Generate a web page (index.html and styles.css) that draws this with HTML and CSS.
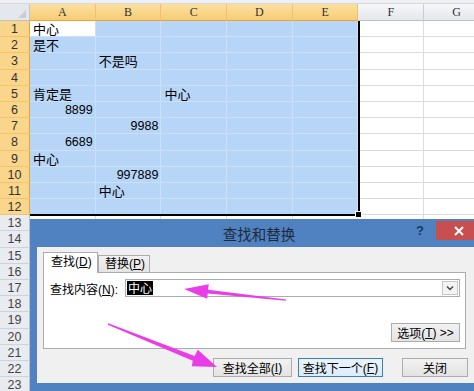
FILE: index.html
```html
<!DOCTYPE html>
<html lang="zh-CN">
<head>
    <meta charset="UTF-8">
    <title>查找和替换</title>
    <link rel="stylesheet" href="styles.css">
</head>
<body>

<div class="top-strip"></div>

<div class="sheet">
    <div class="row head">
        <div class="corner"><span class="corner-tri"></span></div>
        <div class="ch on">A</div><div class="ch on">B</div><div class="ch on">C</div><div class="ch on">D</div><div class="ch on">E</div><div class="ch">F</div><div class="ch">G</div>
    </div>
    <div class="row"><div class="rh on">1</div><div class="c active">中心</div><div class="c s"></div><div class="c s"></div><div class="c s"></div><div class="c s"></div><div class="c"></div><div class="c"></div></div>
    <div class="row"><div class="rh on">2</div><div class="c s">是不</div><div class="c s"></div><div class="c s"></div><div class="c s"></div><div class="c s"></div><div class="c"></div><div class="c"></div></div>
    <div class="row"><div class="rh on">3</div><div class="c s"></div><div class="c s">不是吗</div><div class="c s"></div><div class="c s"></div><div class="c s"></div><div class="c"></div><div class="c"></div></div>
    <div class="row"><div class="rh on">4</div><div class="c s"></div><div class="c s"></div><div class="c s"></div><div class="c s"></div><div class="c s"></div><div class="c"></div><div class="c"></div></div>
    <div class="row"><div class="rh on">5</div><div class="c s">肯定是</div><div class="c s"></div><div class="c s">中心</div><div class="c s"></div><div class="c s"></div><div class="c"></div><div class="c"></div></div>
    <div class="row"><div class="rh on">6</div><div class="c s n">8899</div><div class="c s"></div><div class="c s"></div><div class="c s"></div><div class="c s"></div><div class="c"></div><div class="c"></div></div>
    <div class="row"><div class="rh on">7</div><div class="c s"></div><div class="c s n">9988</div><div class="c s"></div><div class="c s"></div><div class="c s"></div><div class="c"></div><div class="c"></div></div>
    <div class="row"><div class="rh on">8</div><div class="c s n">6689</div><div class="c s"></div><div class="c s"></div><div class="c s"></div><div class="c s"></div><div class="c"></div><div class="c"></div></div>
    <div class="row"><div class="rh on">9</div><div class="c s">中心</div><div class="c s"></div><div class="c s"></div><div class="c s"></div><div class="c s"></div><div class="c"></div><div class="c"></div></div>
    <div class="row"><div class="rh on">10</div><div class="c s"></div><div class="c s n">997889</div><div class="c s"></div><div class="c s"></div><div class="c s"></div><div class="c"></div><div class="c"></div></div>
    <div class="row"><div class="rh on">11</div><div class="c s"></div><div class="c s">中心</div><div class="c s"></div><div class="c s"></div><div class="c s"></div><div class="c"></div><div class="c"></div></div>
    <div class="row"><div class="rh on">12</div><div class="c s"></div><div class="c s"></div><div class="c s"></div><div class="c s"></div><div class="c s"></div><div class="c"></div><div class="c"></div></div>
    <div class="row"><div class="rh">13</div><div class="c"></div><div class="c"></div><div class="c"></div><div class="c"></div><div class="c"></div><div class="c"></div><div class="c"></div></div>
    <div class="row"><div class="rh">14</div></div>
    <div class="row"><div class="rh">15</div></div>
    <div class="row"><div class="rh">16</div></div>
    <div class="row"><div class="rh">17</div></div>
    <div class="row"><div class="rh">18</div></div>
    <div class="row"><div class="rh">19</div></div>
    <div class="row"><div class="rh">20</div></div>
    <div class="row"><div class="rh">21</div></div>
    <div class="row"><div class="rh">22</div></div>
    <div class="row"><div class="rh">23</div></div>
</div>

<!-- selection outline A1:E12 -->
<div class="selection"><span class="handle"></span></div>

<div class="dialog">
    <div class="titlebar">
        <div class="title">查找和替换</div>
        <div class="controls">
            <span class="help">?</span>
            <span class="close">
                <svg width="10" height="10" viewBox="0 0 10 10"><path d="M1 1 L9 9 M9 1 L1 9" stroke="#fff" stroke-width="2"/></svg>
            </span>
        </div>
    </div>
    <div class="dlg-body">
        <div class="tabs">
            <div class="tab active">查找(<u>D</u>)</div>
            <div class="tab">替换(<u>P</u>)</div>
        </div>
        <div class="panel">
            <div class="find-row">
                <span class="find-label">查找内容(<u>N</u>):</span>
                <div class="find-input">
                    <span class="hl">中心</span>
                    <span class="drop">
                        <svg width="8" height="6" viewBox="0 0 8 6"><path d="M1 1.5 L4 4.5 L7 1.5" fill="none" stroke="#444" stroke-width="1.4"/></svg>
                    </span>
                </div>
            </div>
            <button class="btn options">选项(<u>T</u>) &gt;&gt;</button>
        </div>
        <div class="actions">
            <button class="btn find-all">查找全部(<u>I</u>)</button>
            <button class="btn find-next">查找下一个(<u>F</u>)</button>
            <button class="btn close-btn">关闭</button>
        </div>
    </div>
</div>

<svg class="arrows" width="474" height="391" viewBox="0 0 474 391">
    <polygon fill="#e93de8" points="286,299.5 208.1,289.8 208.8,284.2 184,289 207.2,298.8 207.7,293.6 286,300.7"/>
    <polygon fill="#e93de8" points="108.2,323.3 194.6,356.1 197.8,349.8 217,367 191.8,366.2 192.8,360.8 107.8,324.7"/>
</svg>

</body>
</html>
```

FILE: styles.css
```css
body {
    margin: 0;
    width: 474px;
    height: 391px;
    overflow: hidden;
    position: relative;
    background: #fff;
    font-family: "Liberation Sans", "Noto Sans CJK SC", sans-serif;
}
.top-strip {
    height: 4px;
    background: #eef0f3;
    border-bottom: 1px solid #d5d9de;
    box-sizing: border-box;
}
.row {
    display: grid;
    grid-template-columns: 30px repeat(7, 65.7px);
    height: 16.2px;
}
.row.head {
    height: 17px;
}
.corner {
    background: #e4e8ed;
    border-right: 1px solid #c2c8cf;
    border-bottom: 1px solid #b9c1ca;
    position: relative;
}
.corner-tri {
    position: absolute;
    right: 3px;
    bottom: 2px;
    width: 0;
    height: 0;
    border-left: 8px solid transparent;
    border-bottom: 8px solid #c9ced5;
}
.ch {
    background: linear-gradient(#f6f7f9, #e3e7ec);
    border-right: 1px solid #c9ced5;
    border-bottom: 1px solid #b9c1ca;
    font-family: "Liberation Serif", serif;
    font-size: 12px;
    color: #333;
    text-align: center;
    line-height: 16px;
}
.ch.on {
    background: linear-gradient(#fbe0a2, #f7cd73);
    border-right-color: #f0c270;
    border-bottom-color: #e8a23e;
}
.rh {
    background: #e8ecf1;
    border-right: 1px solid #b9c1ca;
    border-bottom: 1px solid #cdd3da;
    font-size: 12.5px;
    color: #444;
    text-align: center;
    line-height: 17px;
    height: 16.2px;
    box-sizing: border-box;
    overflow: hidden;
}
.rh.on {
    background: #f9d68c;
    border-right-color: #e8a23e;
    border-bottom-color: #f3c46c;
    color: #333;
}
.c {
    border-right: 1px solid #dadcdd;
    border-bottom: 1px solid #dadcdd;
    box-sizing: border-box;
    font-family: "Noto Sans CJK SC", sans-serif;
    font-size: 13px;
    line-height: 16px;
    height: 16.2px;
    color: #000;
    padding-left: 3px;
    white-space: nowrap;
}
.c.s {
    background: #b7d5f6;
    border-color: #cbe0f8;
}
.c.active {
    background: #fff;
    border-color: #cbe0f8;
}
.c.n {
    font-family: "Liberation Sans", sans-serif;
    font-size: 12.5px;
    text-align: right;
    padding-right: 2px;
}
.selection {
    position: absolute;
    left: 30px;
    top: 21px;
    width: 330px;
    height: 195px;
    box-sizing: border-box;
    border-right: 2px solid #000;
    border-bottom: 2px solid #000;
}
.handle {
    position: absolute;
    right: -4px;
    bottom: -4px;
    width: 5px;
    height: 5px;
    background: #000;
    border: 1px solid #fff;
}

/* find & replace dialog */
.dialog {
    position: absolute;
    left: 30px;
    top: 219px;
    width: 458px;
    height: 172px;
    box-sizing: border-box;
    background: #5081c1;
    padding: 0 7px 8px;
    display: flex;
    flex-direction: column;
    font-family: "Liberation Sans", "Noto Sans CJK SC", sans-serif;
    font-size: 12px;
}
.titlebar {
    height: 28px;
    display: grid;
}
.title, .controls {
    grid-area: 1 / 1;
}
.title {
    align-self: center;
    text-align: center;
    font-family: "Noto Sans CJK SC", sans-serif;
    font-size: 14.5px;
    color: #1f2a38;
}
.controls {
    justify-self: end;
    display: flex;
    align-items: flex-start;
    padding-top: 2px;
}
.help {
    font-weight: bold;
    font-size: 13px;
    color: #1b3a62;
    margin-right: 12px;
    margin-top: 2px;
}
.close {
    width: 45px;
    height: 19px;
    background: #c84f4f;
    display: flex;
    align-items: center;
    justify-content: center;
}
.dlg-body {
    flex: 1;
    background: #f0f0f0;
    padding: 5px 15px 0 6px;
    display: flex;
    flex-direction: column;
}
.tabs {
    display: flex;
    align-items: flex-end;
    height: 20px;
}
.tab {
    width: 52px;
    height: 17px;
    box-sizing: border-box;
    border: 1px solid #acacac;
    border-bottom: none;
    background: linear-gradient(#f2f2f2, #e4e4e4);
    padding-left: 6px;
    line-height: 16px;
    color: #000;
}
.tab.active {
    width: 55px;
    height: 21px;
    margin-bottom: -1px;
    background: #fff;
    line-height: 19px;
    padding-left: 7px;
    position: relative;
    z-index: 1;
}
.panel {
    height: 77px;
    box-sizing: border-box;
    background: #fff;
    border: 1px solid #acacac;
    padding: 6px 5px 6px 6px;
    display: flex;
    flex-direction: column;
}
.find-row {
    display: flex;
    align-items: center;
    height: 18px;
}
.find-label {
    width: 75px;
    color: #000;
}
.find-input {
    width: 335px;
    height: 18px;
    box-sizing: border-box;
    border: 1px solid #abadb3;
    background: #fff;
    display: flex;
    align-items: center;
    justify-content: space-between;
    padding: 0 1px;
}
.hl {
    background: #000;
    color: #fff;
    font-family: "Noto Sans CJK SC", sans-serif;
    font-size: 12px;
    line-height: 14px;
    padding: 0 1px;
}
.drop {
    width: 16px;
    height: 14px;
    box-sizing: border-box;
    border: 1px solid #c6c6c6;
    background: #f3f3f3;
    display: flex;
    align-items: center;
    justify-content: center;
}
.btn {
    height: 19px;
    box-sizing: border-box;
    border: 1px solid #acacac;
    background: linear-gradient(#f2f2f2, #e3e3e3);
    font-family: "Liberation Sans", "Noto Sans CJK SC", sans-serif;
    font-size: 12px;
    color: #000;
    padding: 0;
    display: flex;
    align-items: center;
    justify-content: center;
}
.options {
    width: 69px;
    margin-top: auto;
    align-self: flex-end;
}
.actions {
    display: flex;
    justify-content: flex-end;
    margin-top: 9px;
    margin-right: -2px;
}
.find-all {
    width: 79px;
    margin-right: 6px;
}
.find-next {
    width: 85px;
    margin-right: 19px;
    border-color: #3c7fb1;
    background: linear-gradient(#eaf3fb, #dcecfc);
}
.close-btn {
    width: 66px;
}
.arrows {
    position: absolute;
    left: 0;
    top: 0;
}
```
